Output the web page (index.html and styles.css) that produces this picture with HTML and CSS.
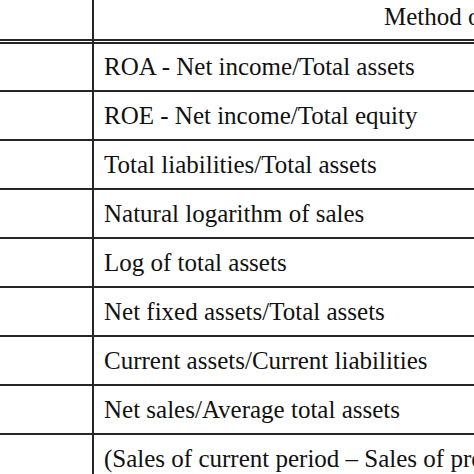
FILE: index.html
```html
<!DOCTYPE html>
<html>
<head>
<meta charset="utf-8">
<link rel="stylesheet" href="styles.css">
</head>
<body>
<div class="sheet">
  <div class="head">
    <div class="key"></div>
    <div class="val head-val">Method of calculation</div>
  </div>
  <div class="rows">
    <div class="row"><div class="key"></div><div class="val">ROA - Net income/Total assets</div></div>
    <div class="row"><div class="key"></div><div class="val">ROE - Net income/Total equity</div></div>
    <div class="row"><div class="key"></div><div class="val">Total liabilities/Total assets</div></div>
    <div class="row"><div class="key"></div><div class="val">Natural logarithm of sales</div></div>
    <div class="row"><div class="key"></div><div class="val">Log of total assets</div></div>
    <div class="row"><div class="key"></div><div class="val">Net fixed assets/Total assets</div></div>
    <div class="row"><div class="key"></div><div class="val">Current assets/Current liabilities</div></div>
    <div class="row"><div class="key"></div><div class="val">Net sales/Average total assets</div></div>
    <div class="row"><div class="key"></div><div class="val">(Sales of current period – Sales of previous period)/Sales of previous period</div></div>
  </div>
</div>
</body>
</html>
```
FILE: styles.css
```css
html, body {
  margin: 0;
  padding: 0;
  background: #fff;
}
body {
  width: 474px;
  height: 474px;
  overflow: hidden;
  font-family: "Liberation Serif", "Times New Roman", serif;
  font-size: 25px;
  color: #111;
}
.sheet {
  width: 900px;
  background: linear-gradient(to right, transparent 92px, #262626 92px, #262626 94px, transparent 94px);
}
.head {
  display: flex;
  align-items: flex-start;
  height: 39px;
  border-bottom: 2px solid #262626;
}
.rows {
  margin-top: 1px;
  border-top: 2px solid #262626;
}
.row {
  display: flex;
  align-items: center;
  height: 47px;
  border-bottom: 2px solid #262626;
}
.row:first-child {
  height: 46px;
}
.key {
  width: 94px;
  flex: none;
}
.val {
  padding-left: 10px;
  white-space: nowrap;
  line-height: 1.1;
}
.head-val {
  padding-left: 290px;
  padding-top: 3px;
}
```
